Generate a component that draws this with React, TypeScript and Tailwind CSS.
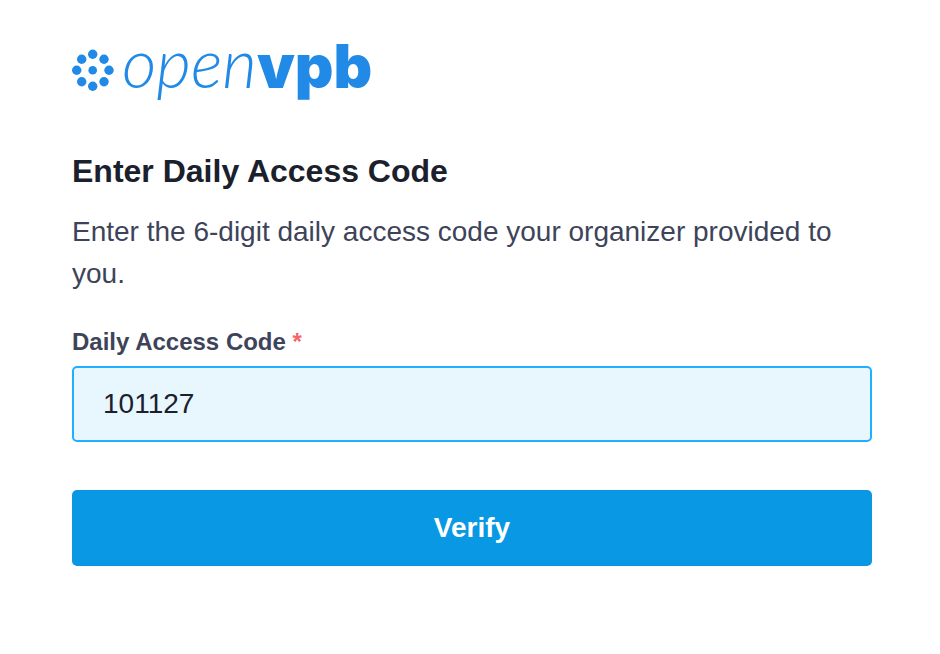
const sans = '"Liberation Sans", Arial, sans-serif';

function LogoDots() {
  const dots = [
    [20.7, 5.3], [32, 10.3], [37, 21.3], [32, 32.7], [20.7, 37.3], [9.7, 32.7], [4.7, 21.3], [9.7, 10.3],
  ];
  return (
    <svg width="42" height="43" viewBox="0 0 42 43" className="shrink-0" fill="#2189e6">
      {dots.map(([cx, cy]) => (
        <circle key={`${cx}-${cy}`} cx={cx} cy={cy} r="4.7" />
      ))}
      <circle cx="20.7" cy="21.3" r="4.3" />
    </svg>
  );
}

export default function App() {
  return (
    <div className="min-h-screen bg-white px-[72px] pt-[38px]" style={{ fontFamily: sans }}>
      <div className="w-[800px]">
        <div className="flex h-[65px] items-center text-[#2189e6]">
          <LogoDots />
          <div className="mb-[16px] ml-[8px] flex items-baseline leading-none whitespace-nowrap">
            <span className="text-[67px] font-light italic" style={{ fontFamily: 'Lato, sans-serif' }}>open</span>
            <span className="text-[60px] font-black" style={{ fontFamily: 'Inter, sans-serif' }}>vpb</span>
          </div>
        </div>

        <h1 className="mt-[48px] text-[32px] leading-[40px] font-bold text-[#1a202c]">Enter Daily Access Code</h1>
        <p className="mt-[20px] text-[28px] leading-[42px] text-[#3d4459]">
          Enter the 6-digit daily access code your organizer provided to you.
        </p>

        <label className="mt-[29px] block text-[24px] leading-[36px] font-bold text-[#3d4459]">
          Daily Access Code <span className="text-[#f56565]">*</span>
        </label>
        <input
          readOnly
          value="101127"
          className="mt-[6px] block h-[76px] w-full rounded-[5px] border-2 border-[#1fb0ff] bg-[#e8f6fe] px-[29px] text-[28px] text-[#1a202c] outline-none"
        />
        <button className="mt-[48px] h-[76px] w-full rounded-[5px] bg-[#0898e4] text-[28px] font-bold text-white">
          Verify
        </button>
      </div>
    </div>
  );
}
